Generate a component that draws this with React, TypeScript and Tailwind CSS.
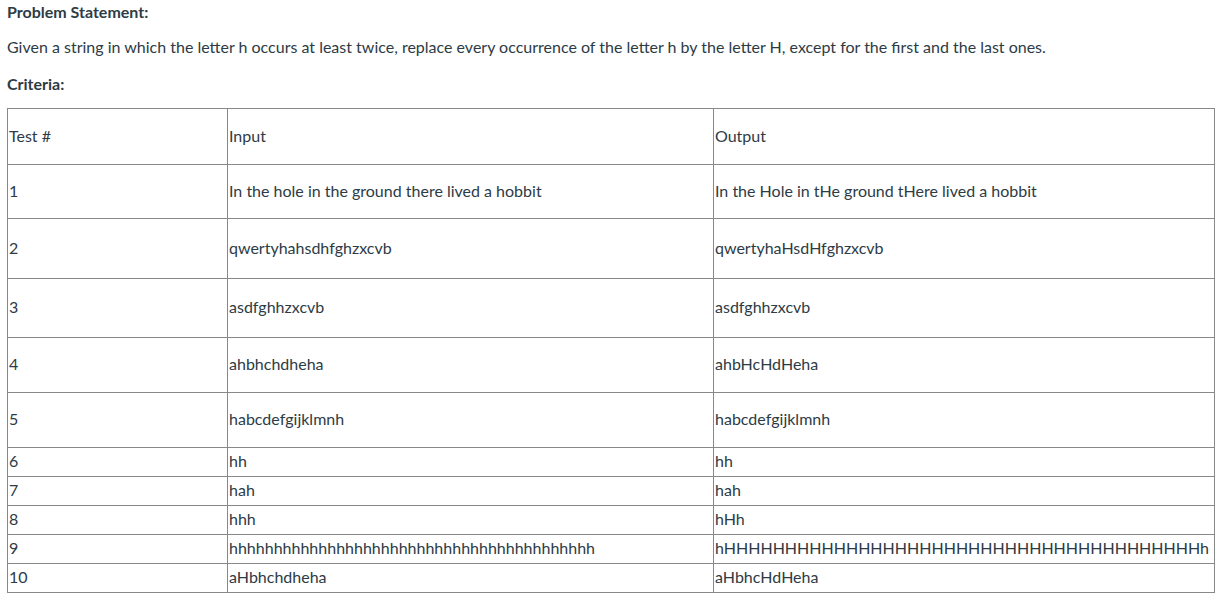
import React from "react";

const H9 = "h".repeat(41);
const O9 = "h" + "H".repeat(39) + "h";

const rows: { n: string; i: string; o: string; h: string }[] = [
  { n: "1", i: "In the hole in the ground there lived a hobbit", o: "In the Hole in tHe ground tHere lived a hobbit", h: "h-[54px]" },
  { n: "2", i: "qwertyhahsdhfghzxcvb", o: "qwertyhaHsdHfghzxcvb", h: "h-[60px]" },
  { n: "3", i: "asdfghhzxcvb", o: "asdfghhzxcvb", h: "h-[59px]" },
  { n: "4", i: "ahbhchdheha", o: "ahbHcHdHeha", h: "h-[55px]" },
  { n: "5", i: "habcdefgijklmnh", o: "habcdefgijklmnh", h: "h-[55px]" },
  { n: "6", i: "hh", o: "hh", h: "h-[29px]" },
  { n: "7", i: "hah", o: "hah", h: "h-[29px]" },
  { n: "8", i: "hhh", o: "hHh", h: "h-[29px]" },
  { n: "9", i: H9, o: O9, h: "h-[29px]" },
  { n: "10", i: "aHbhchdheha", o: "aHbhcHdHeha", h: "h-[29px]" },
];

export default function App() {
  const cell = "border border-[#888888] px-[1px] pt-0 pb-[2px] align-middle font-normal text-left whitespace-nowrap overflow-hidden";
  return (
    <div className="bg-white w-[1221px] h-[598px] text-[#2d3b45] text-[16px] px-[7px] pt-[2px]" style={{ fontFamily: "Lato, 'Open Sans', sans-serif" }}>
      <p className="font-bold leading-[20px]">Problem Statement:</p>
      <p className="mt-[15px] leading-[20px]">
        Given a string in which the letter h occurs at least twice, replace every occurrence of the letter h by the letter H, except for the first and the last ones.
      </p>
      <p className="mt-[17px] font-bold leading-[20px]">Criteria:</p>
      <table className="mt-[14px] border-collapse w-[1208px] table-fixed">
        <colgroup>
          <col className="w-[220px]" />
          <col className="w-[486px]" />
          <col />
        </colgroup>
        <tbody>
          <tr className="h-[56px]">
            <td className={cell}>Test #</td>
            <td className={cell}>Input</td>
            <td className={cell}>Output</td>
          </tr>
          {rows.map((r) => (
            <tr key={r.n} className={r.h}>
              <td className={cell}>{r.n}</td>
              <td className={cell}>{r.i}</td>
              <td className={cell}>{r.o}</td>
            </tr>
          ))}
        </tbody>
      </table>
    </div>
  );
}
